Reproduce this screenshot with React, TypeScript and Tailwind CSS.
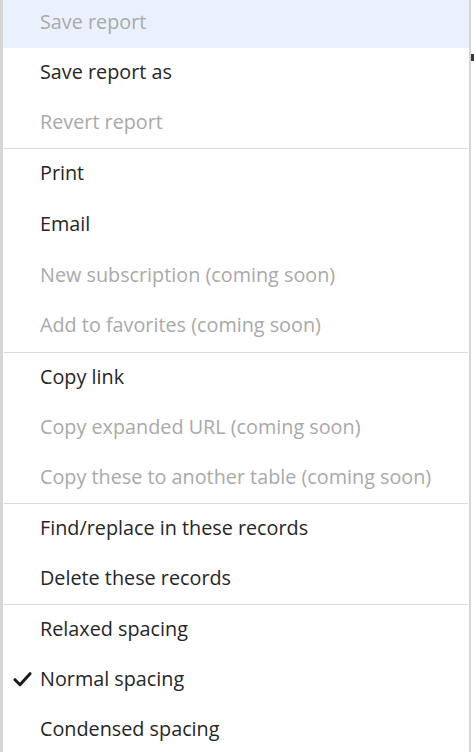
import React from "react";

type Item = { label: string; disabled?: boolean; checked?: boolean; active?: boolean };

const sections: Item[][] = [
  [
    { label: "Save report", disabled: true, active: true },
    { label: "Save report as" },
    { label: "Revert report", disabled: true },
  ],
  [
    { label: "Print" },
    { label: "Email" },
    { label: "New subscription (coming soon)", disabled: true },
    { label: "Add to favorites (coming soon)", disabled: true },
  ],
  [
    { label: "Copy link" },
    { label: "Copy expanded URL (coming soon)", disabled: true },
    { label: "Copy these to another table (coming soon)", disabled: true },
  ],
  [{ label: "Find/replace in these records" }, { label: "Delete these records" }],
  [
    { label: "Relaxed spacing" },
    { label: "Normal spacing", checked: true },
    { label: "Condensed spacing" },
  ],
];

const Check: React.FC = () => (
  <svg width="19" height="16" viewBox="0 0 19 16" className="absolute left-[10px] top-1/2 -translate-y-[55%]">
    <path d="M2 8.5 L7 13.5 L17 2.5" fill="none" stroke="#1a1a1a" strokeWidth="3" strokeLinecap="round" strokeLinejoin="round" />
  </svg>
);

const MenuRow: React.FC<{ item: Item; tall?: boolean }> = ({ item, tall }) => (
  <div
    className={`relative flex items-center pb-[3px] pl-[37px] text-[19.8px] ${tall ? "h-[50.75px]" : "h-[50px]"} ${
      item.active ? "bg-[#ebf1fc]" : ""
    } ${item.disabled ? "text-[#a9a9a9]" : "text-[#262626]"}`}
  >
    {item.checked && <Check />}
    <span className="whitespace-nowrap">{item.label}</span>
  </div>
);

const App: React.FC = () => {
  return (
    <div className="relative h-[754px] w-[474px] overflow-hidden bg-white" style={{ fontFamily: '"Open Sans", sans-serif' }}>
      <div className="absolute right-0 top-[54px] h-[7px] w-[3px] bg-[#2f3a4a]" />
      <div className="h-full w-[471px] border-l-[3px] border-r-[2px] border-[#d6d6d6] -mt-[2px]">
        {sections.map((section, si) => (
          <div key={si}>
            {si > 0 && <div className="mx-[1px] h-[1px] bg-[#dcdcdc]" />}
            {section.map((item) => (
              <MenuRow key={item.label} item={item} tall={si === 1} />
            ))}
          </div>
        ))}
      </div>
    </div>
  );
};

export default App;
